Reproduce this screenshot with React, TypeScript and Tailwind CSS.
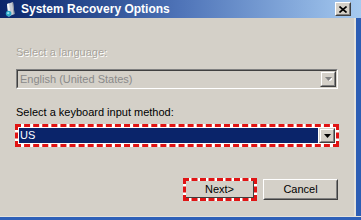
import React from "react";

const font = { fontFamily: '"Liberation Sans", Arial, sans-serif' };

function Arrow({ disabled }: { disabled?: boolean }) {
  return (
    <svg width="7" height="4" viewBox="0 0 7 4" className="block">
      {disabled && <polygon points="1,1 8,1 4.5,5" fill="#ffffff" />}
      <polygon points="0,0 7,0 3.5,4" fill={disabled ? "#808080" : "#000000"} />
    </svg>
  );
}

function DropButton({ disabled }: { disabled?: boolean }) {
  return (
    <div className="h-full w-[16px] border border-t-[#d4d0c8] border-l-[#d4d0c8] border-b-[#404040] border-r-[#404040]">
      <div className="flex h-full w-full items-center justify-center border border-t-white border-l-white border-b-[#808080] border-r-[#808080] bg-[#d4d0c8]">
        <Arrow disabled={disabled} />
      </div>
    </div>
  );
}

export default function App() {
  return (
    <div className="flex h-[220px] w-[361px] flex-col overflow-hidden bg-[#d4d0c8] text-[11px] text-black" style={font}>
      {/* Title bar */}
      <div className="flex h-[18px] shrink-0 items-center bg-gradient-to-r from-[#0a246a] via-[#4f74b8] to-[#a6caf0] pl-[5px] pr-[10px]">
        <svg width="11" height="15" viewBox="0 0 11 15" className="shrink-0">
          <polygon points="2,2 8,0 9.5,12 3.5,14.5" fill="#c8ccd4" />
          <polygon points="2,2 4,1.4 5.5,14 3.5,14.5" fill="#f4f6f8" />
          <polygon points="8,0 9.5,12 8.6,12.4 7.2,0.3" fill="#8a909c" />
          <circle cx="3.6" cy="11.6" r="2.8" fill="#2aa6c8" />
          <circle cx="3.2" cy="11.1" r="1.2" fill="#8fe0f0" />
        </svg>
        <span className="ml-[5px] text-[12px] font-bold leading-none text-white">System Recovery Options</span>
        <div className="ml-auto h-[14px] w-[16px] border border-t-white border-l-white border-b-[#404040] border-r-[#404040]">
          <div className="flex h-full w-full items-center justify-center border border-t-[#d4d0c8] border-l-[#d4d0c8] border-b-[#808080] border-r-[#808080] bg-[#d4d0c8]">
            <svg width="8" height="7" viewBox="0 0 8 7" className="block">
              <path d="M0.5 0.5 L7.5 6.5 M7.5 0.5 L0.5 6.5" stroke="#000" strokeWidth="1.6" />
            </svg>
          </div>
        </div>
      </div>

      {/* Body + right frame */}
      <div className="flex flex-1">
        <div className="flex flex-1 flex-col px-[16px]">
          <div className="mt-[27px] h-[14px] leading-[14px] text-[#a8a49c]" style={{ textShadow: "1px 1px 0 #ffffff" }}>
            Select a language:
          </div>
          <div className="mt-[10px] h-[20px] w-[322px] border border-t-[#808080] border-l-[#808080] border-b-white border-r-white">
            <div className="flex h-full w-full items-center border border-t-[#404040] border-l-[#404040] border-b-[#d4d0c8] border-r-[#d4d0c8] bg-[#d4d0c8]">
              <span className="flex-1 pl-[2px] text-[#8a8a8a]">English (United States)</span>
              <DropButton disabled />
            </div>
          </div>

          <div className="mt-[16px] h-[14px] leading-[14px]">Select a keyboard input method:</div>
          <div className="-mx-px mt-[5px] h-[23px] w-[324px] border-[3px] border-dashed border-[#e01414] bg-white p-px">
            <div className="flex h-full w-full items-center">
              <div className="flex h-full flex-1 items-center bg-[#0a246a] pl-px text-white">US</div>
              <div className="h-full pl-px">
                <DropButton />
              </div>
            </div>
          </div>

          <div className="mt-[31px] flex items-center justify-end gap-[6px]">
            <div className="h-[23px] w-[74px] border-[3px] border-dashed border-[#e01414] bg-white">
              <div className="flex h-full w-full items-center justify-center border-b border-r border-b-[#404040] border-r-[#404040] bg-[#d4d0c8]">
                Next&gt;
              </div>
            </div>
            <div className="h-[21px] w-[75px] border border-t-white border-l-white border-b-[#404040] border-r-[#404040]">
              <div className="flex h-full w-full items-center justify-center border border-t-[#d4d0c8] border-l-[#d4d0c8] border-b-[#808080] border-r-[#808080] bg-[#d4d0c8]">
                Cancel
              </div>
            </div>
          </div>
        </div>
        <div className="w-[7px] shrink-0 border-l-2 border-l-[#e4e2dc] bg-[#2c5db4]" />
      </div>
      <div className="h-[4px] shrink-0 border-t border-t-[#e4e2dc] bg-[#2e60b8]" />
    </div>
  );
}
